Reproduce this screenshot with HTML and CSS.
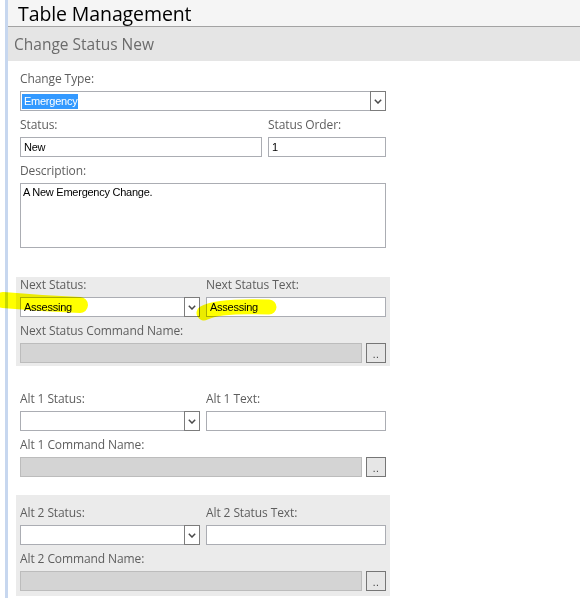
FILE: index.html
```html
<!DOCTYPE html>
<html lang="en">
<head>
<meta charset="utf-8">
<title>Table Management</title>
<link rel="stylesheet" href="styles.css">
</head>
<body>
<div class="page">
  <header class="titlebar"><h1 class="title">Table Management</h1></header>
  <div class="section-head"><h2 class="section-title">Change Status New</h2></div>

  <div class="form">
    <div class="block block-main">
      <div class="field">
        <div class="label">Change Type:</div>
        <div class="select">
          <div class="value"><span class="selected">Emergency</span></div>
          <div class="arrow"><svg width="8" height="5" viewBox="0 0 8 5"><path d="M0.8 0.8 L4 4 L7.2 0.8" fill="none" stroke="#4a4a4a" stroke-width="1.5"/></svg></div>
        </div>
      </div>
      <div class="row row-status">
        <div class="field">
          <div class="label">Status:</div>
          <div class="input"><span class="text">New</span></div>
        </div>
        <div class="field">
          <div class="label">Status Order:</div>
          <div class="input"><span class="text">1</span></div>
        </div>
      </div>
      <div class="field">
        <div class="label">Description:</div>
        <div class="textarea">A New Emergency Change.</div>
      </div>
    </div>

    <div class="block panel panel-next">
      <div class="row row-pair">
        <div class="field">
          <div class="label">Next Status:</div>
          <div class="select">
            <div class="value"><span class="text">Assessing</span></div>
            <div class="arrow"><svg width="8" height="5" viewBox="0 0 8 5"><path d="M0.8 0.8 L4 4 L7.2 0.8" fill="none" stroke="#4a4a4a" stroke-width="1.5"/></svg></div>
          </div>
        </div>
        <div class="field">
          <div class="label">Next Status Text:</div>
          <div class="input"><span class="text">Assessing</span></div>
        </div>
      </div>
      <div class="field">
        <div class="label">Next Status Command Name:</div>
        <div class="row row-cmd">
          <div class="input disabled"></div>
          <div class="btn">..</div>
        </div>
      </div>
    </div>

    <div class="block block-alt1">
      <div class="row row-pair">
        <div class="field">
          <div class="label">Alt 1 Status:</div>
          <div class="select">
            <div class="value"></div>
            <div class="arrow"><svg width="8" height="5" viewBox="0 0 8 5"><path d="M0.8 0.8 L4 4 L7.2 0.8" fill="none" stroke="#4a4a4a" stroke-width="1.5"/></svg></div>
          </div>
        </div>
        <div class="field">
          <div class="label">Alt 1 Text:</div>
          <div class="input"></div>
        </div>
      </div>
      <div class="field">
        <div class="label">Alt 1 Command Name:</div>
        <div class="row row-cmd">
          <div class="input disabled"></div>
          <div class="btn">..</div>
        </div>
      </div>
    </div>

    <div class="block panel panel-alt2">
      <div class="row row-pair">
        <div class="field">
          <div class="label">Alt 2 Status:</div>
          <div class="select">
            <div class="value"></div>
            <div class="arrow"><svg width="8" height="5" viewBox="0 0 8 5"><path d="M0.8 0.8 L4 4 L7.2 0.8" fill="none" stroke="#4a4a4a" stroke-width="1.5"/></svg></div>
          </div>
        </div>
        <div class="field">
          <div class="label">Alt 2 Status Text:</div>
          <div class="input"></div>
        </div>
      </div>
      <div class="field">
        <div class="label">Alt 2 Command Name:</div>
        <div class="row row-cmd">
          <div class="input disabled"></div>
          <div class="btn">..</div>
        </div>
      </div>
    </div>
  </div>
</div>

<svg class="marker" width="580" height="598" viewBox="0 0 580 598" aria-hidden="true">
  <path d="M3 300 C 25 302, 55 304, 80 305" fill="none" stroke="#ffff00" stroke-width="16" stroke-linecap="round"/>
  <path d="M204 313 C 215 307, 240 306, 269 307" fill="none" stroke="#ffff00" stroke-width="15" stroke-linecap="round"/>
</svg>
</body>
</html>
```
FILE: styles.css
```css
html, body {
  margin: 0;
  padding: 0;
  background: #ffffff;
}

body {
  width: 580px;
  height: 598px;
  overflow: hidden;
  font-family: "Open Sans", "Noto Sans", sans-serif;
}

.page {
  margin-left: 5px;
  border-left: 3px solid #c7d7ef;
  height: 598px;
  box-sizing: border-box;
}

.titlebar {
  height: 26px;
  background: #f5f5f5;
  border-bottom: 1px solid #a3a3a3;
}

.title {
  margin: 0;
  padding: 1px 0 0 10px;
  font-size: 19.5px;
  font-weight: 400;
  line-height: 25px;
  color: #000000;
  letter-spacing: -0.1px;
}

.section-head {
  height: 34px;
  background: #e5e5e5;
}

.section-title {
  margin: 0;
  padding-left: 6px;
  font-size: 15.5px;
  font-weight: 400;
  line-height: 34px;
  color: #6b6b6b;
}

.form {
  width: 374px;
  margin-left: 8px;
}

.block {
  display: flex;
  flex-direction: column;
  gap: 6px;
  padding: 0 4px;
}

.block-main {
  padding-top: 10px;
}

.panel {
  background: #ebebeb;
}

.panel-next {
  margin-top: 29px;
  padding-top: 0;
  padding-bottom: 3px;
}

.block-alt1 {
  margin-top: 25px;
}

.panel-alt2 {
  margin-top: 18px;
  padding-top: 10px;
  padding-bottom: 5px;
}

.field {
  display: flex;
  flex-direction: column;
  gap: 4px;
  min-width: 0;
}

.label {
  font-size: 12px;
  line-height: 16px;
  height: 16px;
  color: #5e5e5e;
  white-space: nowrap;
  letter-spacing: -0.1px;
}

.row {
  display: grid;
}

.row-status {
  grid-template-columns: 242px 118px;
  gap: 6px;
}

.row-pair {
  grid-template-columns: 180px 180px;
  gap: 6px;
}

.row-cmd {
  grid-template-columns: 342px 20px;
  gap: 4px;
}

.input,
.select,
.textarea {
  box-sizing: border-box;
  height: 20px;
  border: 1px solid #abadb3;
  background: #ffffff;
  font-family: "Liberation Sans", Arial, sans-serif;
  font-size: 11px;
  letter-spacing: -0.25px;
  color: #000000;
}

.input {
  display: flex;
  align-items: center;
  padding-left: 3px;
}

.input.disabled {
  background: #d4d4d4;
  border-color: #bcbcbc;
}

.text {
  line-height: 14px;
}

.select {
  display: flex;
  align-items: stretch;
}

.value {
  flex: 1;
  display: flex;
  align-items: center;
  padding-left: 3px;
}

.selected {
  display: inline-block;
  margin-left: -2px;
  padding: 0 1px 0 2px;
  line-height: 15px;
  height: 15px;
  background: #3399ff;
  color: #ffffff;
}

.arrow {
  box-sizing: border-box;
  width: 16px;
  margin: -1px -1px -1px 0;
  border: 1px solid #7c7c7c;
  background: #ffffff;
  display: flex;
  align-items: center;
  justify-content: center;
}

.textarea {
  height: 65px;
  padding: 2px 2px;
  line-height: 13px;
}

.btn {
  box-sizing: border-box;
  height: 20px;
  border: 1px solid #767676;
  background: #e6e6e6;
  font-family: "Liberation Sans", Arial, sans-serif;
  font-size: 10px;
  line-height: 10px;
  color: #333333;
  text-align: center;
  padding-top: 6px;
  letter-spacing: 0.5px;
}

.marker {
  position: absolute;
  left: 0;
  top: 0;
  pointer-events: none;
  mix-blend-mode: multiply;
}
```
